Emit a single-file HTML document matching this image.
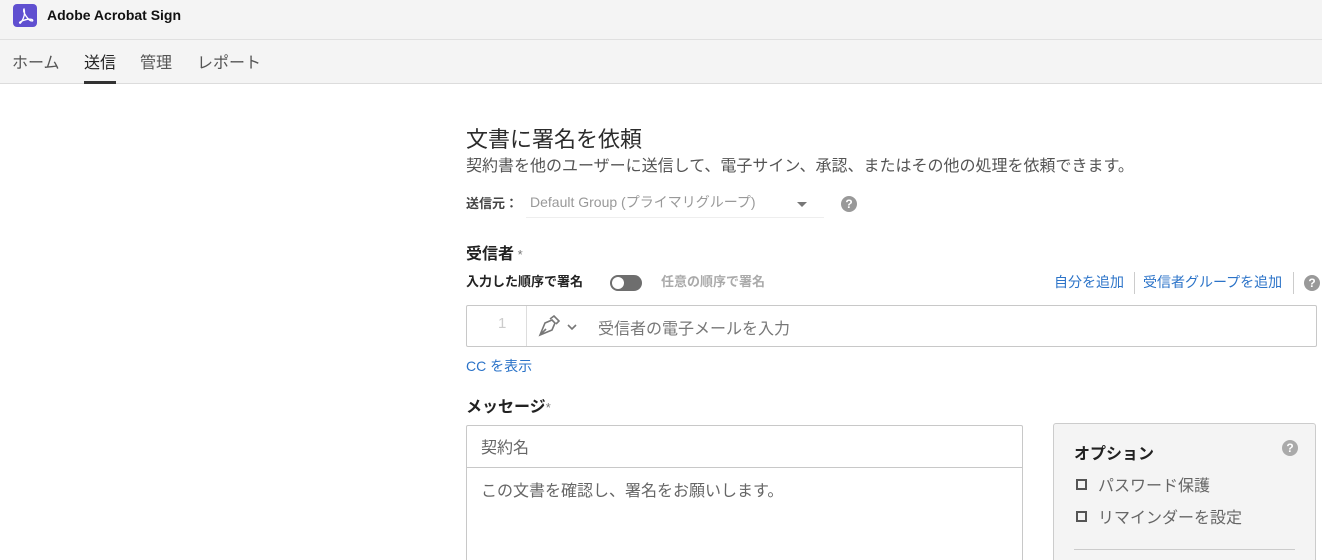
<!DOCTYPE html>
<html><head><meta charset="utf-8"><style>
*{box-sizing:border-box;margin:0;padding:0}
html,body{width:1322px;height:560px;overflow:hidden}
body{background:#fff;font-family:"Liberation Sans","Noto Sans CJK JP",sans-serif;color:#2c2c2c;position:relative}
.a{position:absolute;white-space:nowrap}
</style></head><body>
<div class="a" style="left:0;top:0;width:1322px;height:84px;background:#f4f4f4;border-bottom:1px solid #dcdcdc"></div>
<div class="a" style="left:0;top:39px;width:1322px;height:1px;background:#e0e0e0"></div>
<div class="a" style="left:13px;top:4px;width:24px;height:23px;background:#5f4fd0;border-radius:4px"></div>
<svg class="a" style="left:13px;top:4px" width="24" height="23" viewBox="0 0 24 23"><path d="M11 5c-1 1 0 4 2 7s4 5 6 5c1 0 1-1 0-1.5-2-1-8 0-12 2.5-1 1 0 1.5 .5 1 2-2 4-7 4-10 0-3-.5-4-.5-4z" fill="none" stroke="#fff" stroke-width="1.3"/></svg>
<div class="a" style="left:47px;top:7px;font-size:14px;font-weight:bold;color:#111">Adobe Acrobat Sign</div>
<div class="a" style="left:12px;top:49px;font-size:16px;color:#555">ホーム</div>
<div class="a" style="left:84px;top:49px;font-size:16px;color:#222">送信</div>
<div class="a" style="left:84px;top:81px;width:32px;height:3px;background:#333"></div>
<div class="a" style="left:140px;top:49px;font-size:16px;color:#555">管理</div>
<div class="a" style="left:197px;top:49px;font-size:16px;color:#555">レポート</div>

<div class="a" style="left:466px;top:122px;font-size:22px;color:#2c2c2c">文書に署名を依頼</div>
<div class="a" style="left:466px;top:152px;font-size:16px;color:#555">契約書を他のユーザーに送信して、電子サイン、承認、またはその他の処理を依頼できます。</div>
<div class="a" style="left:466px;top:193px;font-size:13px;font-weight:bold;color:#444">送信元：</div>
<div class="a" style="left:530px;top:192px;font-size:14px;color:#999">Default Group (プライマリグループ)</div>
<div class="a" style="left:526px;top:217px;width:298px;height:1px;background:#eee"></div>
<div class="a" style="left:797px;top:202px;border-left:5px solid transparent;border-right:5px solid transparent;border-top:5px solid #777"></div>
<div class="a" style="left:841px;top:196px;width:16px;height:16px;border-radius:50%;background:#999;color:#fff;font-size:12px;font-weight:bold;text-align:center;line-height:16px">?</div>

<div class="a" style="left:466px;top:240px;font-size:16px;font-weight:bold;color:#222">受信者<span style="font-weight:normal;color:#777;font-size:13px"> *</span></div>
<div class="a" style="left:466px;top:271px;font-size:13px;font-weight:bold;color:#222">入力した順序で署名</div>
<div class="a" style="left:610px;top:275px;width:32px;height:16px;border-radius:8px;background:#6e6e6e"></div>
<div class="a" style="left:612px;top:277px;width:12px;height:12px;border-radius:50%;background:#fff"></div>
<div class="a" style="left:661px;top:271px;font-size:13px;font-weight:bold;color:#aaa">任意の順序で署名</div>
<div class="a" style="left:1054px;top:272px;font-size:14px;color:#2b73c8">自分を追加</div>
<div class="a" style="left:1134px;top:272px;width:1px;height:22px;background:#ccc"></div>
<div class="a" style="left:1143px;top:272px;font-size:14px;color:#2b73c8">受信者グループを追加</div>
<div class="a" style="left:1293px;top:272px;width:1px;height:22px;background:#ccc"></div>
<div class="a" style="left:1304px;top:275px;width:16px;height:16px;border-radius:50%;background:#999;color:#fff;font-size:12px;font-weight:bold;text-align:center;line-height:16px">?</div>

<div class="a" style="left:466px;top:305px;width:851px;height:42px;border:1px solid #c8c8c8;border-radius:2px"></div>
<div class="a" style="left:526px;top:306px;width:1px;height:40px;background:#ddd"></div>
<div class="a" style="left:498px;top:315px;font-size:15px;color:#ccc">1</div>
<svg class="a" style="left:538px;top:315px" width="40" height="24" viewBox="0 0 40 24"><path d="M2 20l5-12 7-3 3 3-3 7-12 5zM2 20l6-6M12 4l4-3 5 5-3 3" fill="none" stroke="#777" stroke-width="1.6"/><path d="M30 10l4 4 4-4" fill="none" stroke="#777" stroke-width="1.6"/></svg>
<div class="a" style="left:598px;top:315px;font-size:16px;color:#777">受信者の電子メールを入力</div>
<div class="a" style="left:466px;top:356px;font-size:14px;color:#2b73c8">CC を表示</div>

<div class="a" style="left:466px;top:393px;font-size:16px;font-weight:bold;color:#222">メッセージ<span style="font-weight:normal;color:#777;font-size:13px">*</span></div>
<div class="a" style="left:466px;top:425px;width:557px;height:140px;border:1px solid #c8c8c8;border-radius:2px"></div>
<div class="a" style="left:467px;top:467px;width:555px;height:1px;background:#c8c8c8"></div>
<div class="a" style="left:481px;top:434px;font-size:16px;color:#666">契約名</div>
<div class="a" style="left:481px;top:477px;font-size:16px;color:#666">この文書を確認し、署名をお願いします。</div>

<div class="a" style="left:1053px;top:423px;width:263px;height:150px;background:#f4f4f4;border:1px solid #ccc;border-radius:3px"></div>
<div class="a" style="left:1074px;top:440px;font-size:16px;font-weight:bold;color:#222">オプション</div>
<div class="a" style="left:1282px;top:440px;width:16px;height:16px;border-radius:50%;background:#aaa;color:#fff;font-size:12px;font-weight:bold;text-align:center;line-height:16px">?</div>
<div class="a" style="left:1076px;top:479px;width:11px;height:11px;border:2px solid #555"></div>
<div class="a" style="left:1098px;top:472px;font-size:16px;color:#666">パスワード保護</div>
<div class="a" style="left:1076px;top:511px;width:11px;height:11px;border:2px solid #555"></div>
<div class="a" style="left:1098px;top:504px;font-size:16px;color:#666">リマインダーを設定</div>
<div class="a" style="left:1074px;top:549px;width:221px;height:1px;background:#ccc"></div>
</body></html>
